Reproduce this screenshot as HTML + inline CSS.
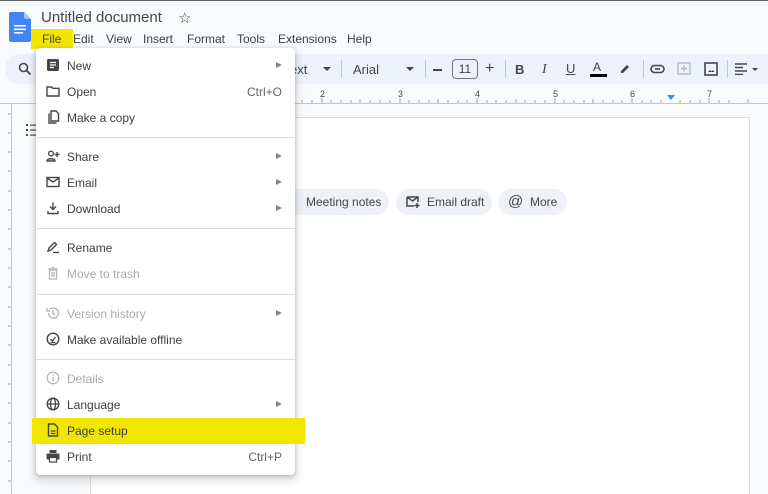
<!DOCTYPE html>
<html style="width:768px;height:494px;overflow:hidden"><head><meta charset="utf-8"><style>
*{box-sizing:border-box;margin:0;padding:0}
html,body{width:768px;height:494px;overflow:hidden}
body{background:#f9fbfd;font-family:"Liberation Sans",Arial,sans-serif;position:relative;color:#444746}
.abs{position:absolute}
.t{position:absolute;white-space:nowrap}
.mi{position:absolute;left:67px;font-size:12px;color:#3c4043;white-space:nowrap}
.dis{color:#a8abaf}
.ic{position:absolute;left:46px;width:14px;height:14px}
.arr{position:absolute;left:276px;width:0;height:0;border-left:6px solid #80868b;border-top:3.5px solid transparent;border-bottom:3.5px solid transparent}
.sep{position:absolute;left:36px;width:259px;height:1px;background:#dadce0}
.sc{position:absolute;right:486px;font-size:12px;color:#5f6368}
.chip{position:absolute;top:189px;height:26px;border-radius:13px;background:#eef1f6;font-size:12px;color:#444746}
.tb{position:absolute;top:60px;font-size:13px;color:#444746}
.dv{position:absolute;top:60px;width:1px;height:18px;background:#c7c7c7}
</style></head><body>
<div class="abs" style="left:0;top:0;width:768px;height:1px;background:#5f6368"></div>
<svg class="abs" style="left:9px;top:12px" width="22" height="30" viewBox="0 0 22 30"><path d="M2 0h13l7 7v21a2 2 0 0 1-2 2H2a2 2 0 0 1-2-2V2a2 2 0 0 1 2-2z" fill="#4285f4"/><path d="M15 0l7 7h-5a2 2 0 0 1-2-2z" fill="#a1c2fa"/><rect x="5" y="13" width="12" height="1.6" fill="#fff"/><rect x="5" y="16.5" width="12" height="1.6" fill="#fff"/><rect x="5" y="20" width="9" height="1.6" fill="#fff"/></svg>
<div class="t" style="left:41px;top:9px;font-size:15px;color:#444746">Untitled document</div>
<div class="t" style="left:178px;top:9px;font-size:15px;color:#444746">☆</div>
<div class="abs" style="left:31px;top:29px;width:42px;height:20px;background:#f2e600"></div>
<div class="t" style="left:42px;top:32px;font-size:12px;color:#3c4043">File</div>
<div class="t" style="left:73px;top:32px;font-size:12px;color:#3c4043">Edit</div>
<div class="t" style="left:106px;top:32px;font-size:12px;color:#3c4043">View</div>
<div class="t" style="left:143px;top:32px;font-size:12px;color:#3c4043">Insert</div>
<div class="t" style="left:187px;top:32px;font-size:12px;color:#3c4043">Format</div>
<div class="t" style="left:237px;top:32px;font-size:12px;color:#3c4043">Tools</div>
<div class="t" style="left:278px;top:32px;font-size:12px;color:#3c4043">Extensions</div>
<div class="t" style="left:347px;top:32px;font-size:12px;color:#3c4043">Help</div>
<div class="abs" style="left:5px;top:54px;width:780px;height:30px;border-radius:15px;background:#edf2fa"></div>
<svg class="abs" style="left:18px;top:62px" width="14" height="14" viewBox="0 0 14 14"><circle cx="5.5" cy="5.5" r="4" fill="none" stroke="#444746" stroke-width="1.6"/><path d="M8.5 8.5l4 4" stroke="#444746" stroke-width="1.8"/></svg>
<div class="tb" style="left:290px;top:62px">ext</div>
<div class="abs" style="left:323px;top:67px;border-top:4px solid #444746;border-left:4px solid transparent;border-right:4px solid transparent"></div>
<div class="dv" style="left:341px"></div>
<div class="tb" style="left:353px;top:62px">Arial</div>
<div class="abs" style="left:406px;top:67px;border-top:4px solid #444746;border-left:4px solid transparent;border-right:4px solid transparent"></div>
<div class="dv" style="left:425px"></div>
<div class="abs" style="left:433px;top:69px;width:9px;height:1.5px;background:#444746"></div>
<div class="abs" style="left:452px;top:59px;width:26px;height:20px;border:1px solid #747775;border-radius:4px;font-size:12px;text-align:center;line-height:18px;color:#444746">11</div>
<div class="tb" style="left:485px;top:60px;font-size:16px">+</div>
<div class="dv" style="left:505px"></div>
<div class="tb" style="left:515px;top:62px;font-weight:bold">B</div>
<div class="tb" style="left:542px;top:62px;font-style:italic;font-family:'Liberation Serif',serif;font-size:14px">I</div>
<div class="tb" style="left:566px;top:61px;text-decoration:underline">U</div>
<div class="tb" style="left:593px;top:60px;font-size:12px">A</div>
<div class="abs" style="left:590px;top:74px;width:17px;height:3px;background:#000"></div>
<svg class="abs" style="left:619px;top:62px" width="13" height="13" viewBox="0 0 13 13"><path d="M2 9l6-6 2 2-6 6H2z" fill="#444746"/></svg>
<div class="dv" style="left:643px"></div>
<svg class="abs" style="left:650px;top:64px" width="15" height="10" viewBox="0 0 15 10"><rect x="1" y="1.5" width="13" height="7" rx="3.5" fill="none" stroke="#444746" stroke-width="1.6"/><rect x="5" y="4" width="5" height="2" fill="#edf2fa"/><path d="M5 5h5" stroke="#444746" stroke-width="1.6"/></svg>
<svg class="abs" style="left:677px;top:62px" width="14" height="14" viewBox="0 0 14 14"><rect x="1" y="1" width="12" height="11" fill="none" stroke="#b4b8bc" stroke-width="1.4"/><path d="M7 3.5v6M4 6.5h6" stroke="#b4b8bc" stroke-width="1.4"/></svg>
<svg class="abs" style="left:704px;top:62px" width="14" height="14" viewBox="0 0 14 14"><rect x="1" y="1" width="12" height="12" fill="none" stroke="#444746" stroke-width="1.6"/><path d="M4 10l2-2 1.5 1.5L9 8l1.5 2z" fill="#444746"/></svg>
<div class="dv" style="left:727px"></div>
<svg class="abs" style="left:735px;top:63px" width="26" height="12" viewBox="0 0 26 12"><path d="M0 1h12M0 4.5h8M0 8h12M0 11.5h8" stroke="#444746" stroke-width="1.4"/><path d="M17 5l3 3 3-3z" fill="#444746"/></svg>
<div class="abs" style="left:0;top:103px;width:768px;height:1px;background:#c7c7c7"></div>
<svg class="abs" style="left:0;top:88px" width="768" height="16">
<g stroke="#a0a4a8" stroke-width="1">
<path d="M302 12v3M312 12v3M322 10v5M331 12v3M341 12v3M351 12v3M360 11v4M370 12v3M380 12v3M390 12v3M400 10v5M409 12v3M419 12v3M429 12v3M438 11v4M448 12v3M458 12v3M467 12v3M477 10v5M487 12v3M496 12v3M506 12v3M516 11v4M525 12v3M535 12v3M545 12v3M555 10v5M564 12v3M574 12v3M584 12v3M593 11v4M603 12v3M613 12v3M622 12v3M632 10v5M642 12v3M651 12v3M661 12v3M680 12v3M690 12v3M700 12v3M709 10v5M719 12v3M729 12v3M748 11v4"/>
</g>
<g font-size="9" fill="#444746" font-family="Liberation Sans"><text x="320" y="9">2</text><text x="398" y="9">3</text><text x="475" y="9">4</text><text x="553" y="9">5</text><text x="630" y="9">6</text><text x="707" y="9">7</text></g>
<path d="M667 7h8l-4 5z" fill="#4285f4"/>
</svg>
<div class="abs" style="left:11px;top:104px;width:1px;height:390px;background:#c7c7c7"></div>
<svg class="abs" style="left:0;top:104px" width="11" height="390"><g stroke="#a0a4a8"><path d="M8 10h3M8 29h3M8 48h3M8 67h3M8 87h3M8 106h3M8 125h3M8 145h3M8 164h3M8 183h3M8 203h3M8 222h3M8 241h3M8 261h3M8 280h3M8 299h3M8 319h3M8 338h3M8 357h3M8 377h3"/></g></svg>
<div class="abs" style="left:90px;top:117px;width:660px;height:377px;background:#fff;border:1px solid #dadce0;border-bottom:none"></div>
<svg class="abs" style="left:26px;top:124px" width="14" height="12" viewBox="0 0 14 12"><g fill="#444746"><rect x="0" y="0" width="2" height="2"/><rect x="0" y="5" width="2" height="2"/><rect x="0" y="10" width="2" height="2"/><rect x="4" y="0.5" width="10" height="1.2"/><rect x="4" y="5.5" width="10" height="1.2"/><rect x="4" y="10.5" width="10" height="1.2"/></g></svg>
<div class="chip" style="left:270px;width:119px"><span class="t" style="left:36px;top:6px">Meeting notes</span></div>
<div class="chip" style="left:396px;width:96px"><svg class="abs" style="left:10px;top:7px" width="14" height="13" viewBox="0 0 14 13"><path d="M1 1h11v5M1 1v9h7" fill="none" stroke="#444746" stroke-width="1.5"/><path d="M1 1l5.5 4L12 1" fill="none" stroke="#444746" stroke-width="1.5"/><path d="M11 7v5M8.5 9.5h5" stroke="#444746" stroke-width="1.5"/></svg><span class="t" style="left:31px;top:6px">Email draft</span></div>
<div class="chip" style="left:498px;width:69px"><span class="t" style="left:10px;top:4px;font-size:15px;color:#444746">@</span><span class="t" style="left:32px;top:6px">More</span></div>
<div class="abs" style="left:36px;top:48px;width:259px;height:427px;background:#fff;border-radius:4px;box-shadow:0 1px 3px rgba(60,64,67,.3),0 4px 8px 3px rgba(60,64,67,.15)"></div>
<div class="abs" style="left:32px;top:418px;width:273px;height:26px;background:#f2e600"></div>
<div class="sep" style="top:137px"></div>
<div class="sep" style="top:228px"></div>
<div class="sep" style="top:294px"></div>
<div class="sep" style="top:359px"></div>
<svg class="ic" style="top:58px" viewBox="0 0 14 14"><rect x="1" y="1" width="12" height="12" rx="1.5" fill="#444746"/><path d="M4 4.5h6M4 7h6M4 9.5h4" stroke="#fff" stroke-width="1.2"/></svg>
<svg class="ic" style="top:84px" viewBox="0 0 14 14"><path d="M1 3h4.5l1.2 1.3H13V12H1z" fill="none" stroke="#444746" stroke-width="1.4"/></svg>
<svg class="ic" style="top:110px" viewBox="0 0 14 14"><path d="M3 3.5V13h7.5" fill="none" stroke="#444746" stroke-width="1.4"/><path d="M5 1h5l2.5 2.5V11H5z" fill="none" stroke="#444746" stroke-width="1.4"/></svg>
<svg class="ic" style="top:149px" viewBox="0 0 14 14"><circle cx="5" cy="4.5" r="2.3" fill="none" stroke="#444746" stroke-width="1.4"/><path d="M1 12c0-3 8-3 8 0z" fill="none" stroke="#444746" stroke-width="1.4"/><path d="M11 3v5M8.5 5.5h5" stroke="#444746" stroke-width="1.4"/></svg>
<svg class="ic" style="top:175px" viewBox="0 0 14 14"><rect x="1" y="2.5" width="12" height="9" fill="none" stroke="#444746" stroke-width="1.4"/><path d="M1 3l6 4 6-4" fill="none" stroke="#444746" stroke-width="1.4"/></svg>
<svg class="ic" style="top:201px" viewBox="0 0 14 14"><path d="M7 1.5v7M4 5.5l3 3 3-3M2 10v2.5h10V10" fill="none" stroke="#444746" stroke-width="1.4"/></svg>
<svg class="ic" style="top:240px" viewBox="0 0 14 14"><path d="M2 11l1-3 5.5-5.5 2 2L5 10z" fill="none" stroke="#444746" stroke-width="1.4"/><path d="M7 12.5h6" stroke="#444746" stroke-width="1.4"/></svg>
<svg class="ic" style="top:266px" viewBox="0 0 14 14"><path d="M3.5 4h7v9h-7zM2 3h10M5.5 1.5h3M6 6v5M8 6v5" fill="none" stroke="#b4b8bc" stroke-width="1.3"/></svg>
<svg class="ic" style="top:306px" viewBox="0 0 14 14"><path d="M2.5 7a5 5 0 1 0 1.5-3.5" fill="none" stroke="#b4b8bc" stroke-width="1.4"/><path d="M1 2v3h3M7 4v3.5l2 1.5" fill="none" stroke="#b4b8bc" stroke-width="1.4"/></svg>
<svg class="ic" style="top:332px" viewBox="0 0 14 14"><circle cx="7" cy="7" r="5.8" fill="none" stroke="#444746" stroke-width="1.4"/><path d="M4.5 7l2 2 3-4M4.5 10.5h5" fill="none" stroke="#444746" stroke-width="1.3"/></svg>
<svg class="ic" style="top:371px" viewBox="0 0 14 14"><circle cx="7" cy="7" r="5.8" fill="none" stroke="#b4b8bc" stroke-width="1.3"/><path d="M7 6v4.5M7 3.5v1.2" stroke="#b4b8bc" stroke-width="1.4"/></svg>
<svg class="ic" style="top:397px" viewBox="0 0 14 14"><circle cx="7" cy="7" r="5.8" fill="none" stroke="#444746" stroke-width="1.4"/><ellipse cx="7" cy="7" rx="2.5" ry="5.8" fill="none" stroke="#444746" stroke-width="1.3"/><path d="M1.2 7h11.6" stroke="#444746" stroke-width="1.3"/></svg>
<svg class="ic" style="top:423px" viewBox="0 0 14 14"><path d="M2.5 1h6l3 3v9h-9z" fill="none" stroke="#444746" stroke-width="1.4"/><path d="M5 8h4.5M5 10.5h4.5" stroke="#444746" stroke-width="1.2"/></svg>
<svg class="ic" style="top:449px" viewBox="0 0 14 14"><rect x="3.5" y="1" width="7" height="3" fill="#444746"/><rect x="0.5" y="4.5" width="13" height="6" rx="1" fill="#444746"/><rect x="3.5" y="8.5" width="7" height="4.5" fill="#fff" stroke="#444746" stroke-width="1.2"/></svg>
<div class="mi" style="top:59px">New</div><div class="arr" style="top:62px"></div>
<div class="mi" style="top:85px">Open</div><div class="sc" style="top:85px">Ctrl+O</div>
<div class="mi" style="top:111px">Make a copy</div>
<div class="mi" style="top:150px">Share</div><div class="arr" style="top:153px"></div>
<div class="mi" style="top:176px">Email</div><div class="arr" style="top:179px"></div>
<div class="mi" style="top:202px">Download</div><div class="arr" style="top:205px"></div>
<div class="mi" style="top:241px">Rename</div>
<div class="mi dis" style="top:267px">Move to trash</div>
<div class="mi dis" style="top:307px">Version history</div><div class="arr" style="top:310px"></div>
<div class="mi" style="top:333px">Make available offline</div>
<div class="mi dis" style="top:372px">Details</div>
<div class="mi" style="top:398px">Language</div><div class="arr" style="top:401px"></div>
<div class="mi" style="top:424px">Page setup</div>
<div class="mi" style="top:450px">Print</div><div class="sc" style="top:450px">Ctrl+P</div>
</body></html>
